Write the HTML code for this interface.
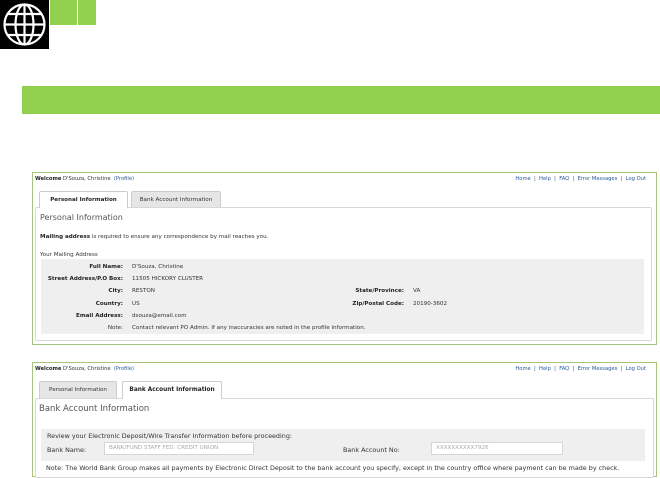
<!DOCTYPE html>
<html><head><style>
*{margin:0;padding:0;box-sizing:border-box}
body{width:660px;height:478px;background:#fff;position:relative;overflow:hidden;font-family:"DejaVu Sans","Liberation Sans",sans-serif;font-size:5.6px;color:#333}
.a{position:absolute;white-space:nowrap}
.panel{position:absolute;border:1px solid #a8c47a;left:32px;width:625px}
.lnk{color:#2a5a9a}
.tab{position:absolute;border:1px solid #ccc;border-bottom:none;text-align:center;border-radius:2px 2px 0 0}
.box{position:absolute;border:1px solid #d8d8d8;background:#fff;border-radius:2px}
.gray{position:absolute;background:#efefef}
b{font-weight:bold;color:#222}
.r{text-align:right}
.inp{position:absolute;background:#fff;border:1px solid #d6d6d6;color:#aaa;padding-left:4px;line-height:11px}
</style></head><body>
<div class="a" style="left:0;top:0;width:49px;height:49px;background:#000">
<svg width="49" height="49" viewBox="0 0 49 49"><g fill="none" stroke="#fff" stroke-width="2.2">
<circle cx="24.5" cy="24.5" r="20"/><ellipse cx="24.5" cy="24.5" rx="9" ry="20"/><line x1="24.5" y1="4.5" x2="24.5" y2="44.5"/><line x1="4.5" y1="24.5" x2="44.5" y2="24.5"/><path d="M8 14H41M8 35H41"/></g></svg></div>
<div class="a" style="left:50px;top:0;width:27px;height:25px;background:#92d050"></div>
<div class="a" style="left:78px;top:0;width:18px;height:25px;background:#92d050"></div>
<div class="a" style="left:22px;top:86px;width:638px;height:28px;background:#92d050"></div>

<div class="panel" style="top:172px;height:173px">
 <div class="a" style="left:2px;top:3px;font-size:5.2px"><b>Welcome</b> D'Souza, Christine &nbsp;<span class="lnk">(Profile)</span></div>
 <div class="a lnk" style="right:10px;top:3px;font-size:5.2px">Home &nbsp;| &nbsp;Help &nbsp;| &nbsp;FAQ &nbsp;| &nbsp;Error Messages &nbsp;| &nbsp;Log Out</div>
 <div class="box" style="left:2px;top:34px;width:617px;height:134px"></div>
 <div class="tab" style="left:6px;top:18px;width:89px;height:17px;background:#fff;line-height:16px"><b>Personal Information</b></div>
 <div class="tab" style="left:98px;top:18px;width:90px;height:16px;background:#e6e6e6;line-height:16px">Bank Account Information</div>
 <div class="a" style="left:7px;top:40px;font-size:8px;color:#555">Personal Information</div>
 <div class="a" style="left:7px;top:61px"><b>Mailing address</b> is required to ensure any correspondence by mail reaches you.</div>
 <div class="a" style="left:7px;top:79px">Your Mailing Address</div>
 <div class="gray" style="left:8px;top:86px;width:603px;height:75px"></div>
 <div class="a r" style="left:0;width:90px;top:88px;line-height:12.2px"><b>Full Name:</b><br><b>Street Address/P.O Box:</b><br><b>City:</b><br><b>Country:</b><br><b>Email Address:</b><br>Note:</div>
 <div class="a" style="left:99px;top:88px;line-height:12.2px">D'Souza, Christine<br>11505 HICKORY CLUSTER<br>RESTON<br>US<br>dsouza@email.com<br>Contact relevant PO Admin. if any inaccuracies are noted in the profile information.</div>
 <div class="a r" style="left:290px;width:81px;top:112.4px;line-height:12.2px"><b>State/Province:</b><br><b>Zip/Postal Code:</b></div>
 <div class="a" style="left:380px;top:112.4px;line-height:12.2px">VA<br>20190-3602</div>
</div>

<div class="panel" style="top:362px;height:115px;font-size:6.4px">
 <div class="a" style="left:2px;top:3px;font-size:5.2px"><b>Welcome</b> D'Souza, Christine &nbsp;<span class="lnk">(Profile)</span></div>
 <div class="a lnk" style="right:10px;top:3px;font-size:5.2px">Home &nbsp;| &nbsp;Help &nbsp;| &nbsp;FAQ &nbsp;| &nbsp;Error Messages &nbsp;| &nbsp;Log Out</div>
 <div class="box" style="left:2px;top:35px;width:619px;height:80px"></div>
 <div class="tab" style="left:6px;top:18px;width:78px;height:17px;background:#e6e6e6;line-height:17px;font-size:5.6px">Personal Information</div>
 <div class="tab" style="left:89px;top:18px;width:100px;height:18px;background:#fff;line-height:17px;font-size:5.8px"><b>Bank Account Information</b></div>
 <div class="a" style="left:6px;top:41px;font-size:8.5px;color:#555">Bank Account Information</div>
 <div class="gray" style="left:8px;top:66px;width:604px;height:32px"></div>
 <div class="a" style="left:14px;top:69px">Review your Electronic Deposit/Wire Transfer Information before proceeding:</div>
 <div class="a" style="left:14px;top:83px">Bank Name:</div>
 <div class="inp" style="left:71px;top:79px;width:150px;height:13px;font-size:5.6px">BANK/FUND STAFF FED. CREDIT UNION</div>
 <div class="a" style="left:310px;top:83px">Bank Account No:</div>
 <div class="inp" style="left:398px;top:79px;width:132px;height:13px;font-size:5.6px">XXXXXXXXXX7926</div>
 <div class="a" style="left:13px;top:101px">Note: The World Bank Group makes all payments by Electronic Direct Deposit to the bank account you specify, except in the country office where payment can be made by check.</div>
</div>
</body></html>
